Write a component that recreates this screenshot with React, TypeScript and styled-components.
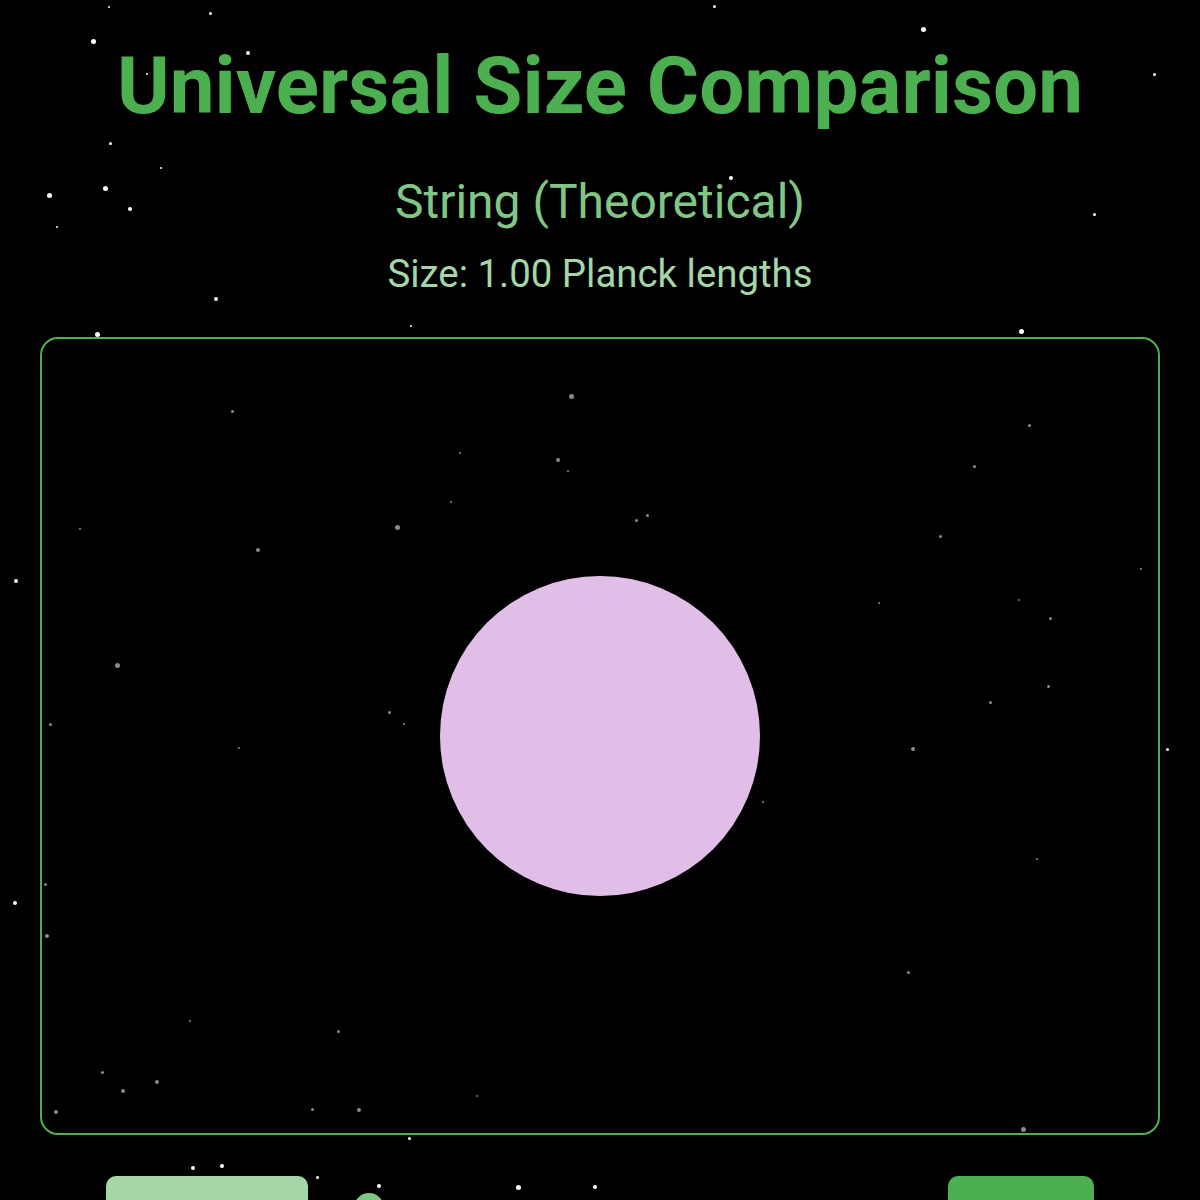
import styled, { createGlobalStyle } from "styled-components";

const GlobalStyle = createGlobalStyle`
  html, body {
    margin: 0;
    padding: 0;
    background: #000;
  }

  body {
    font-family: Roboto, "Liberation Sans", Arial, sans-serif;
    color: #fff;
    overflow: hidden;
  }
`;

// background sky: [x, y, size]
const skyStars: [number, number, number][] = [
  [109, 7, 2], [210, 13, 3], [714, 6, 3], [93, 41, 5], [248, 53, 4], [147, 74, 2],
  [923, 29, 5], [1154, 74, 3], [110, 143, 3], [161, 168, 2], [49, 195, 5],
  [105, 188, 5], [130, 209, 4], [57, 227, 2], [731, 178, 4], [1094, 214, 3],
  [216, 299, 4], [97, 334, 5], [411, 326, 2], [1021, 331, 5], [16, 581, 4],
  [15, 903, 4], [1167, 749, 3], [409, 1138, 3], [193, 1168, 4], [317, 1177, 3],
  [379, 1186, 4], [518, 1187, 5], [1053, 1192, 3], [595, 1187, 4], [222, 1166, 4],
  [1139, 567, 2], [824, 346, 2],
];

// stars inside the viewer, relative to its border box: [x, y, size]
const viewStars: [number, number, number][] = [
  [529, 57, 5], [190, 72, 3], [987, 86, 3], [418, 114, 2], [516, 121, 4],
  [932, 127, 3], [526, 132, 2], [409, 163, 2], [594, 181, 3], [605, 176, 3],
  [355, 188, 5], [38, 190, 2], [216, 211, 4], [898, 197, 3], [1099, 230, 2],
  [977, 261, 2], [837, 264, 2], [1008, 279, 3], [75, 326, 5], [1006, 347, 3],
  [948, 363, 3], [347, 373, 3], [362, 385, 2], [8, 385, 3], [197, 409, 2],
  [871, 410, 4], [721, 463, 2], [995, 520, 2], [3, 545, 3], [5, 597, 4],
  [866, 633, 3], [148, 682, 2], [296, 692, 3], [60, 733, 3], [115, 743, 4],
  [81, 752, 4], [435, 757, 2], [14, 773, 4], [270, 770, 3], [317, 771, 4],
  [981, 790, 5],
];

const Page = styled.div`
  position: relative;
  min-height: 100vh;
`;

const Sky = styled.div`
  position: absolute;
  inset: 0;
  pointer-events: none;
  z-index: 0;
`;

const Star = styled.span<{ $tone: "white" | "grey" }>`
  position: absolute;
  border-radius: 50%;
  background: ${(p) => (p.$tone === "white" ? "#fff" : "#8a8a8a")};
`;

const Content = styled.main`
  position: relative;
  z-index: 1;
  display: flex;
  flex-direction: column;
  align-items: center;
  padding: 38px 40px 40px;
`;

const Title = styled.h1`
  margin: 0;
  font-size: 80px;
  line-height: 96px;
  font-weight: 700;
  color: #4caf50;
`;

const ObjectName = styled.h2`
  margin: 39px 0 0;
  font-size: 48px;
  line-height: 58px;
  font-weight: 400;
  color: #81c784;
`;

const ObjectSize = styled.p`
  margin: 20px 0 0;
  font-size: 38.4px;
  line-height: 46px;
  font-weight: 400;
  color: #a5d6a7;
`;

const Viewer = styled.section`
  position: relative;
  box-sizing: border-box;
  width: 1120px;
  height: 798px;
  margin-top: 40px;
  border: 2px solid #4caf50;
  border-radius: 18px;
  background: #000;
  display: flex;
  align-items: center;
  justify-content: center;
  overflow: hidden;
`;

const Body = styled.div<{ $diameter: number; $color: string }>`
  width: ${(p) => p.$diameter}px;
  height: ${(p) => p.$diameter}px;
  border-radius: 50%;
  background: ${(p) => p.$color};
`;

const Controls = styled.div`
  display: flex;
  align-items: flex-start;
  gap: 40px;
  margin-top: 41px;
  width: 988px;
`;

const NavButton = styled.button<{ $variant: "light" | "solid" }>`
  height: 76px;
  padding: 0 34px;
  border: none;
  border-radius: 10px;
  font-family: Roboto, "Liberation Sans", Arial, sans-serif;
  font-size: 22px;
  font-weight: 500;
  color: ${(p) => (p.$variant === "light" ? "#1b5e20" : "#fff")};
  background: ${(p) => (p.$variant === "light" ? "#a5d6a7" : "#4caf50")};
  cursor: pointer;
`;

const PrevButton = styled(NavButton)`
  width: 202px;
`;

const NextButton = styled(NavButton)`
  width: 146px;
`;

const Slider = styled.div`
  position: relative;
  flex: 1;
  height: 40px;
  margin-top: 17px;
`;

const Track = styled.div`
  position: absolute;
  left: 0;
  right: 0;
  top: 16px;
  height: 8px;
  border-radius: 4px;
  background: #2e4d30;
`;

const Thumb = styled.div`
  position: absolute;
  left: 6px;
  top: 0;
  width: 30px;
  height: 30px;
  border-radius: 50%;
  background: #81c784;
`;

export default function App() {
  return (
    <Page>
      <GlobalStyle />
      <Sky>
        {skyStars.map(([x, y, s], i) => (
          <Star
            key={i}
            $tone="white"
            style={{ left: x - s / 2, top: y - s / 2, width: s, height: s }}
          />
        ))}
      </Sky>
      <Content>
        <Title>Universal Size Comparison</Title>
        <ObjectName>String (Theoretical)</ObjectName>
        <ObjectSize>Size: 1.00 Planck lengths</ObjectSize>
        <Viewer>
          {viewStars.map(([x, y, s], i) => (
            <Star
              key={i}
              $tone="grey"
              style={{ left: x - s / 2, top: y - s / 2, width: s, height: s }}
            />
          ))}
          <Body $diameter={320} $color="#e1bee7" />
        </Viewer>
        <Controls>
          <PrevButton $variant="light">Previous</PrevButton>
          <Slider>
            <Track />
            <Thumb />
          </Slider>
          <NextButton $variant="solid">Next</NextButton>
        </Controls>
      </Content>
    </Page>
  );
}
